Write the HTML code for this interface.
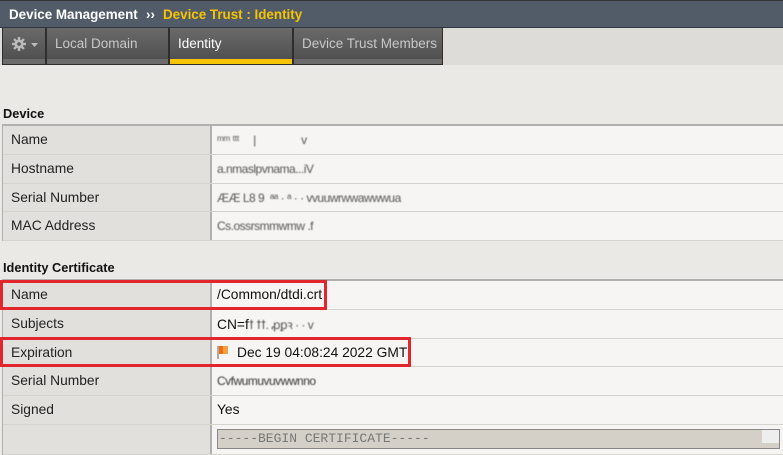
<!DOCTYPE html>
<html><head><meta charset="utf-8"><style>
*{margin:0;padding:0;box-sizing:border-box}
body{width:783px;height:443px;overflow:hidden;background:#ebe9e5;font-family:"Liberation Sans",sans-serif;position:relative}
.hdr{position:absolute;left:0;top:0;width:783px;height:28px;background:#525c68;border-top:1px solid #333;border-bottom:1px solid #2f353c}
.hdr span{position:absolute;top:6px;font-size:13.4px;font-weight:bold;white-space:nowrap}
.tabbar{position:absolute;left:0;top:28px;width:783px;height:37px;background:#dddcd8}
.tab{position:absolute;top:28px;height:37px;background:linear-gradient(#6a6a6a,#4c4c4c);border:1px solid #2e2e2e;border-top:none;color:#c8c8c8;font-size:13.5px;padding:8px 0 0 8px;white-space:nowrap;overflow:hidden}
.tab:after{content:"";position:absolute;left:0;right:0;bottom:0;height:5px;background:#6b6b6b}
.sec{position:absolute;left:3px;font-size:12.8px;font-weight:bold;color:#111}
.tbl{position:absolute;left:2px;width:781px;border-top:2px solid #b0b0b0;border-left:1px solid #b0b0b0}
.row{height:28.8px;border-bottom:1px solid #d4d4d0;position:relative;display:flex}
.lab{width:209px;background:#e1e0dc;border-right:2px solid #b0b0b0;font-size:13.8px;color:#222;padding:6px 0 0 8px}
.val{flex:1;background:#f6f5f3;font-size:13.8px;color:#111;padding:6px 0 0 5px;white-space:nowrap}
.blur{color:#555;letter-spacing:-0.5px;font-size:12px;filter:blur(0.6px)}
.red{position:absolute;border:3px solid #e2262b}
</style></head><body>
<div class="hdr"><span style="left:9px;color:#fff">Device Management</span><span style="left:146px;color:#fff">››</span><span style="left:163px;color:#f7c400">Device Trust : Identity</span></div>
<div class="tabbar"></div>
<div class="tab" style="left:2px;width:44px;padding-left:8px"><svg width="30" height="16" viewBox="0 0 30 16"><g fill="#bbb"><circle cx="8" cy="8" r="4.5"/><rect x="6.8" y="1" width="2.4" height="14"/><rect x="1" y="6.8" width="14" height="2.4"/><rect x="6.8" y="1" width="2.4" height="14" transform="rotate(45 8 8)"/><rect x="6.8" y="1" width="2.4" height="14" transform="rotate(-45 8 8)"/></g><circle cx="8" cy="8" r="1.8" fill="#555"/><path d="M20 7h7l-3.5 4z" fill="#bbb"/></svg></div>
<div class="tab" style="left:46px;width:123px">Local Domain</div>
<div class="tab" style="left:169px;width:124px;color:#fff">Identity</div>
<div style="position:absolute;left:170px;top:59px;width:122px;height:5px;background:#f7c400"></div>
<div class="tab" style="left:293px;width:150px">Device Trust Members</div>

<div class="sec" style="top:106px">Device</div>
<div class="tbl" style="top:124px">
<div class="row"><div class="lab">Name</div><div class="val"><span class="blur">ᵐᵐ ᵗᵗᵗ&nbsp;&nbsp;&nbsp;&nbsp; |&nbsp;&nbsp;&nbsp;&nbsp;&nbsp;&nbsp;&nbsp;&nbsp;&nbsp;&nbsp;&nbsp;&nbsp;&nbsp;&nbsp;&nbsp; v</span></div></div>
<div class="row"><div class="lab">Hostname</div><div class="val"><span class="blur">a.nmaslpvnama...iV</span></div></div>
<div class="row"><div class="lab">Serial Number</div><div class="val"><span class="blur">ÆÆ L8 9 &nbsp;ᵃᵃ · ᵃ · · vvuuwrwwawwwua</span></div></div>
<div class="row"><div class="lab">MAC Address</div><div class="val"><span class="blur">Cs.ossrsmmwmw .f</span></div></div>
</div>

<div class="sec" style="top:260px">Identity Certificate</div>
<div class="tbl" style="top:279px">
<div class="row"><div class="lab">Name</div><div class="val">/Common/dtdi.crt</div></div>
<div class="row"><div class="lab">Subjects</div><div class="val">CN=f<span class="blur">ꝉ ꝉꝉ. ꝓꝑꝛ · · v</span></div></div>
<div class="row"><div class="lab">Expiration</div><div class="val"><svg width="12" height="14" viewBox="0 0 12 14" style="vertical-align:-2px;margin-right:8px"><rect x="0" y="1" width="2" height="13" fill="#aaa"/><rect x="2" y="1" width="9" height="8" fill="#f26a12"/><rect x="6" y="1" width="5" height="8" fill="#f8a040"/></svg>Dec 19 04:08:24 2022 GMT</div></div>
<div class="row"><div class="lab">Serial Number</div><div class="val"><span class="blur" style="color:#333">Cvfwumuvuvwwnno</span></div></div>
<div class="row"><div class="lab">Signed</div><div class="val">Yes</div></div>
<div class="row" style="height:30px"><div class="lab"></div><div class="val"></div></div>
</div>
<div style="position:absolute;left:217px;top:429px;width:563px;height:20px;background:#d4d0c8;border:1px solid #888;font-family:'Liberation Mono',monospace;font-size:13px;color:#777;padding:1px 0 0 1px">-----BEGIN CERTIFICATE-----</div>
<div style="position:absolute;left:762px;top:430px;width:17px;height:13px;background:#eee"></div>
<div class="red" style="left:0;top:280px;width:327px;height:30px"></div>
<div class="red" style="left:0;top:337px;width:411px;height:30px"></div>
</body></html>
